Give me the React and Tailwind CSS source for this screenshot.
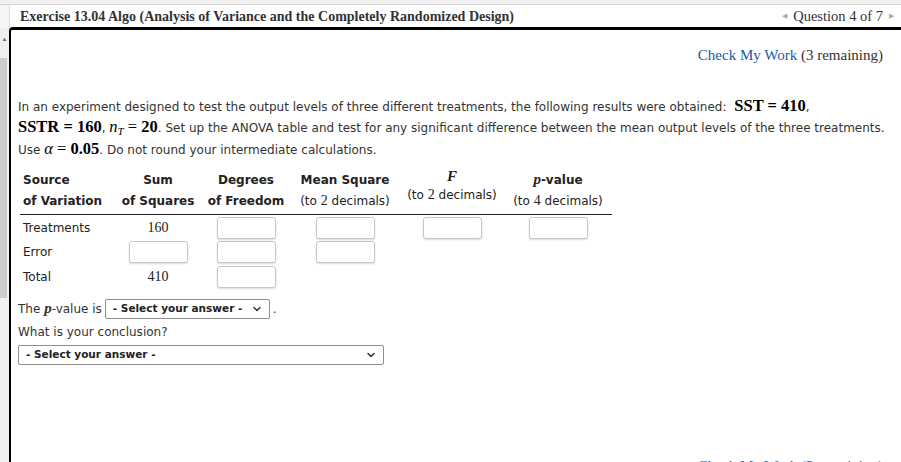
import { ChevronDown } from 'lucide-react';

const sans = "font-['DejaVu_Sans',Verdana,sans-serif]";
const serif = "font-['Liberation_Serif',Georgia,serif]";
const math = "font-['Liberation_Serif','Times_New_Roman',serif] leading-[0]";

function Box({ className = '' }) {
  return <div className={`h-[22px] w-[59px] rounded-[3px] border border-[#c8c8c8] bg-white shadow-[0_1px_2px_rgba(0,0,0,0.15)] ${className}`} />;
}

function Select({ className = '' }) {
  return (
    <div className={`flex h-[20px] items-center justify-between rounded-[2px] border border-[#8f8f8f] bg-white pl-[7px] pr-[6px] ${className}`}>
      <span className={`${sans} text-[10.5px] font-bold text-[#222]`}>- Select your answer -</span>
      <ChevronDown className="h-[12px] w-[12px] text-[#333]" strokeWidth={3} />
    </div>
  );
}

export default function App() {
  return (
    <div className="flex h-[462px] w-[901px] flex-col overflow-hidden bg-white text-[#333]">
      <div className="h-[5px] shrink-0 border-b border-[#d4d4d4] bg-[#f1f1f1]" />
      <div className="flex flex-1">
        {/* scrollbar */}
        <div className="flex w-[9px] shrink-0 flex-col bg-[#f0f0f0]">
          <div className="h-[23px] bg-[#f6f6f6]" />
          <div className="flex h-[30px] items-start justify-center pt-[8px] text-[6px] leading-none text-[#666]">▲</div>
          <div className="h-[240px] w-[7px] bg-[#cdcdcd]" />
        </div>

        <div className="flex flex-1 flex-col">
          <div className="flex h-[22px] shrink-0 items-center justify-between border-l border-[#dcdcdc] pl-[10px] pr-[7px] pt-[1px]">
            <h1 className={`${serif} text-[14px] font-bold text-[#333]`}>Exercise 13.04 Algo (Analysis of Variance and the Completely Randomized Design)</h1>
            <div className={`${serif} flex items-center gap-[6px] text-[14.5px] text-[#333]`}>
              <span className="text-[7px] text-[#aaa]">◀</span>
              <span>Question 4 of 7</span>
              <span className="text-[7px] text-[#aaa]">▶</span>
            </div>
          </div>

          <div className="flex-1 rounded-tl-[4px] border-l-[2px] border-t-[3px] border-black pl-[7px] pr-[6px]">
            <div className={`${serif} mr-[12px] mt-[14px] text-right text-[15px]`}>
              <span className="text-[#1a5aa6]">Check My Work</span> <span className="text-[#333]">(3 remaining)</span>
            </div>

            <p className={`${sans} mt-[30px] text-[12px] leading-[21.5px] text-[#333]`}>
              In an experiment designed to test the output levels of three different treatments, the following results were obtained:{' '}
              <span className={`${math} ml-[4px] text-[16.5px] font-bold text-black`}>SST = 410</span>,
              <br />
              <span className={`${math} text-[16.5px] font-bold text-black`}>SSTR = 160</span>,{' '}
              <span className={`${math} text-[16.5px] text-black`}><i>n</i><sub className="text-[11px]"><i>T</i></sub> = <b>20</b></span>. Set up the ANOVA table and test for any significant difference between the mean output levels of the three treatments.
              <br />
              Use <span className={`${math} text-[16.5px] text-black`}><i>α</i> = <b>0.05</b></span>. Do not round your intermediate calculations.
            </p>

            <table className={`${sans} ml-[2px] mt-[7px] border-collapse text-[12px] text-[#222]`}>
              <thead>
                <tr className="border-b border-[#222] align-bottom leading-[21px]">
                  <th className="w-[94px] pb-[2px] pl-[3px] text-left font-bold">Source<br />of Variation</th>
                  <th className="w-[88px] pb-[2px] text-center font-bold">Sum<br />of Squares</th>
                  <th className="w-[88px] pb-[2px] text-center font-bold">Degrees<br />of Freedom</th>
                  <th className="w-[110px] pb-[2px] text-center font-bold">Mean Square<br /><span className="font-normal">(to <span className={`${math} text-[14px]`}>2</span> decimals)</span></th>
                  <th className="w-[104px] pb-[10px] text-center font-normal leading-[18px]"><i className={`${math} text-[15px] font-bold`}>F</i><br />(to <span className={`${math} text-[14px]`}>2</span> decimals)</th>
                  <th className="w-[108px] pb-[2px] text-center font-bold"><i className={`${math} text-[15px]`}>p</i>-value<br /><span className="font-normal">(to <span className={`${math} text-[14px]`}>4</span> decimals)</span></th>
                </tr>
              </thead>
              <tbody>
                <tr className="h-[25px]">
                  <td className="pl-[3px] pt-[2px]">Treatments</td>
                  <td className={`${math} pt-[2px] text-center text-[14px]`}>160</td>
                  <td className="pt-[2px]"><Box className="mx-auto" /></td>
                  <td className="pt-[2px]"><Box className="mx-auto" /></td>
                  <td className="pt-[2px]"><Box className="mx-auto" /></td>
                  <td className="pt-[2px]"><Box className="mx-auto" /></td>
                </tr>
                <tr className="h-[25px]">
                  <td className="pl-[3px]">Error</td>
                  <td><Box className="mx-auto" /></td>
                  <td><Box className="mx-auto" /></td>
                  <td><Box className="mx-auto" /></td>
                  <td />
                  <td />
                </tr>
                <tr className="h-[25px]">
                  <td className="pl-[3px]">Total</td>
                  <td className={`${math} text-center text-[14px]`}>410</td>
                  <td><Box className="mx-auto" /></td>
                  <td />
                  <td />
                  <td />
                </tr>
              </tbody>
            </table>

            <div className={`${sans} mt-[9px] flex items-center gap-[3px] text-[12px]`}>
              <span>The <i className={`${math} text-[15px] font-bold`}>p</i>-value is</span>
              <Select className="w-[165px]" />
              <span>.</span>
            </div>
            <p className={`${sans} mt-[4px] text-[12px]`}>What is your conclusion?</p>
            <Select className="mt-[4px] w-[366px]" />

            <div className={`${serif} mr-[12px] mt-[90px] text-right text-[15px] text-[#1a5aa6]`}>Check My Work (3 remaining)</div>
          </div>
        </div>
      </div>
    </div>
  );
}
